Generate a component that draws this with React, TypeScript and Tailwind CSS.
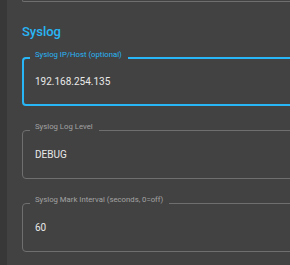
import React from "react";

function Field({
  label,
  value,
  focused = false,
}: {
  label: string;
  value: string;
  focused?: boolean;
}) {
  return (
    <div
      className={`relative flex h-[49px] w-[300px] items-center rounded-[4px] ${
        focused ? "border-2 border-[#29b6f6] pl-[11px]" : "border border-[#6f6f6f] pl-[12px]"
      }`}
    >
      <span
        className={`absolute top-[-8px] bg-[#424242] pl-[5px] pr-[6px] text-[7.75px] leading-[8px] ${
          focused ? "left-[6px] text-[#29b6f6]" : "left-[7px] text-[#a3a3a3]"
        }`}
      >
        {label}
      </span>
      <span className="text-[10px] leading-[12px] text-[#e9e9e9]">{value}</span>
    </div>
  );
}

export default function App() {
  return (
    <div
      className="flex h-[265px] w-[290px] overflow-hidden bg-[#424242]"
      style={{ fontFamily: "Roboto, 'Liberation Sans', sans-serif" }}
    >
      <div className="w-[7px] shrink-0 bg-[#383838]" />
      <div className="flex flex-col pl-[15px]">
        <div className="h-[2px] w-[300px] rounded-bl-[2px] border-b border-l border-[#6f6f6f]" />
        <h2 className="mt-[22px] text-[13px] font-medium leading-[16px] text-[#29b6f6]">Syslog</h2>
        <div className="mt-[17px] flex flex-col gap-[24px]">
          <Field label="Syslog IP/Host (optional)" value="192.168.254.135" focused />
          <Field label="Syslog Log Level" value="DEBUG" />
          <Field label="Syslog Mark Interval (seconds, 0=off)" value="60" />
        </div>
      </div>
    </div>
  );
}
